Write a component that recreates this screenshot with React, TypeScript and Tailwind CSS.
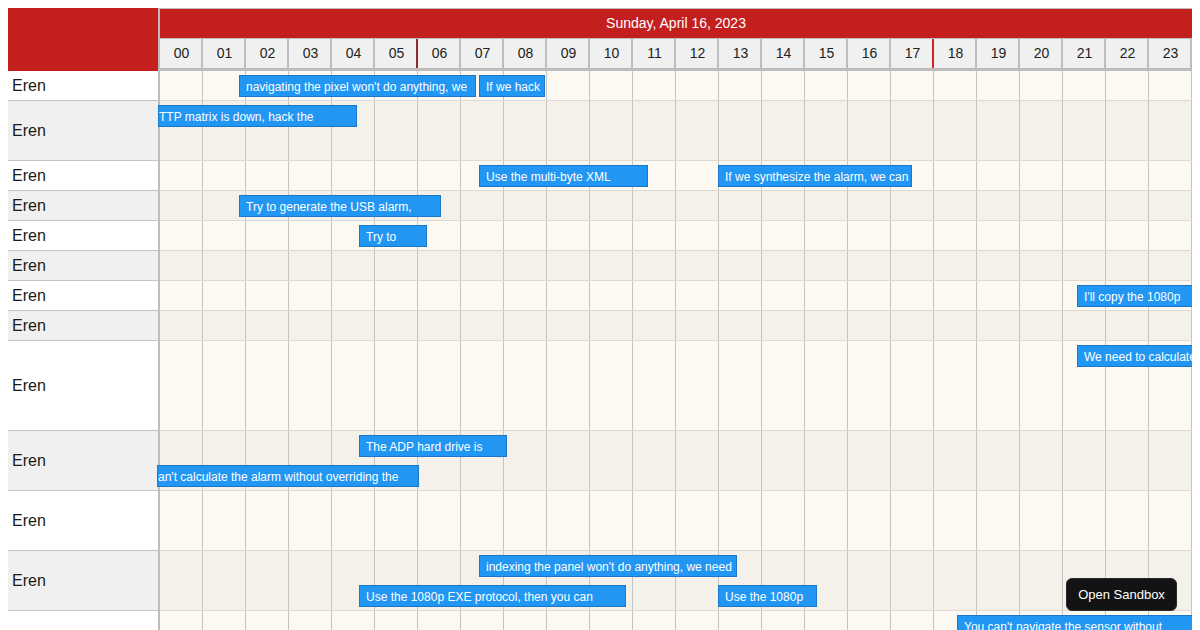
import React from "react";

const HOURS = Array.from({ length: 24 }, (_, i) => String(i).padStart(2, "0"));

type Ev = { text: string; left: number; width: number; lane: number };
type Row = { h: number; events: Ev[] };

const rows: Row[] = [
  {
    h: 30,
    events: [
      { text: "navigating the pixel won't do anything, we", left: 79, width: 237, lane: 0 },
      { text: "If we hack", left: 319, width: 66, lane: 0 },
    ],
  },
  { h: 60, events: [{ text: "TTP matrix is down, hack the", left: -2, width: 199, lane: 0 }] },
  {
    h: 30,
    events: [
      { text: "Use the multi-byte XML", left: 319, width: 169, lane: 0 },
      { text: "If we synthesize the alarm, we can", left: 558, width: 194, lane: 0 },
    ],
  },
  { h: 30, events: [{ text: "Try to generate the USB alarm,", left: 79, width: 202, lane: 0 }] },
  { h: 30, events: [{ text: "Try to", left: 199, width: 68, lane: 0 }] },
  { h: 30, events: [] },
  { h: 30, events: [{ text: "I'll copy the 1080p", left: 917, width: 200, lane: 0 }] },
  { h: 30, events: [] },
  { h: 90, events: [{ text: "We need to calculate the", left: 917, width: 200, lane: 0 }] },
  {
    h: 60,
    events: [
      { text: "The ADP hard drive is", left: 199, width: 148, lane: 0 },
      { text: "an't calculate the alarm without overriding the", left: -3, width: 262, lane: 1 },
    ],
  },
  { h: 60, events: [] },
  {
    h: 60,
    events: [
      { text: "indexing the panel won't do anything, we need", left: 319, width: 258, lane: 0 },
      { text: "Use the 1080p EXE protocol, then you can", left: 199, width: 267, lane: 1 },
      { text: "Use the 1080p", left: 558, width: 99, lane: 1 },
    ],
  },
  { h: 60, events: [{ text: "You can't navigate the sensor without", left: 797, width: 240, lane: 0 }] },
];

function headerBorder(i: number) {
  if (i === 5) return "border-r-2 border-[#8e2a2a]";
  if (i === 17) return "border-r-2 border-[#d42525]";
  return "border-r-2 border-[#bdbdbd]";
}

export default function App() {
  return (
    <div className="h-[630px] w-[1200px] overflow-hidden bg-white font-['Liberation_Sans',Arial,sans-serif]">
      <div className="ml-[8px] mt-[8px] w-[1184px] overflow-hidden">
        {/* Header */}
        <div className="flex">
          <div className="h-[63px] w-[152px] shrink-0 border-r-2 border-[#bdbdbd] bg-[#c41f1f]" />
          <div className="w-[1032px] shrink-0">
            <div className="flex h-[30px] items-center justify-center border-t border-[#bdbdbd] bg-[#c41f1f] text-[14px] text-white">
              Sunday, April 16, 2023
            </div>
            <div className="flex h-[33px] border-t border-b-[3px] border-[#bdbdbd] bg-[#f0f0f0]">
              {HOURS.map((h, i) => (
                <div
                  key={h}
                  className={`flex h-full w-[43px] shrink-0 items-center justify-center pl-[2px] text-[14px] text-[#222] ${headerBorder(i)}`}
                >
                  {h}
                </div>
              ))}
            </div>
          </div>
        </div>

        {/* Body */}
        {rows.map((r, ri) => {
          const odd = ri % 2 === 1;
          return (
            <div key={ri} className="flex" style={{ height: r.h }}>
              <div
                className={`flex w-[152px] shrink-0 items-center border-r-2 border-b border-r-[#bdbdbd] border-b-[#c4c4c4] pl-[4px] text-[16px] text-[#1a1a1a] ${
                  odd ? "bg-[#f0f0f0]" : "bg-white"
                }`}
              >
                Eren
              </div>
              <div
                className={`relative flex w-[1032px] shrink-0 border-b border-[#dedad2] ${
                  odd ? "bg-[#f3f1ea]" : "bg-[#fbf9f2]"
                }`}
              >
                {HOURS.map((h) => (
                  <div key={h} className="h-full w-[43px] shrink-0 border-r border-[#c6c4c0]" />
                ))}
                {r.events.map((e, ei) => (
                  <div
                    key={ei}
                    className="absolute z-10 flex h-[22px] items-center overflow-hidden whitespace-nowrap border border-[#1a77c9] bg-[#2196f3] pt-[2px] text-[12px] text-white"
                    style={{
                      left: e.left,
                      width: e.width,
                      top: 4 + e.lane * 30,
                      paddingLeft: e.left < 0 ? 0 : 6,
                    }}
                  >
                    {e.text}
                  </div>
                ))}
              </div>
            </div>
          );
        })}
      </div>

      <button className="fixed bottom-[19px] right-[23px] z-20 flex h-[33px] w-[111px] items-center justify-center rounded-[6px] border border-[#2a2a2a] bg-[#131313] text-[13px] text-white">
        Open Sandbox
      </button>
    </div>
  );
}
